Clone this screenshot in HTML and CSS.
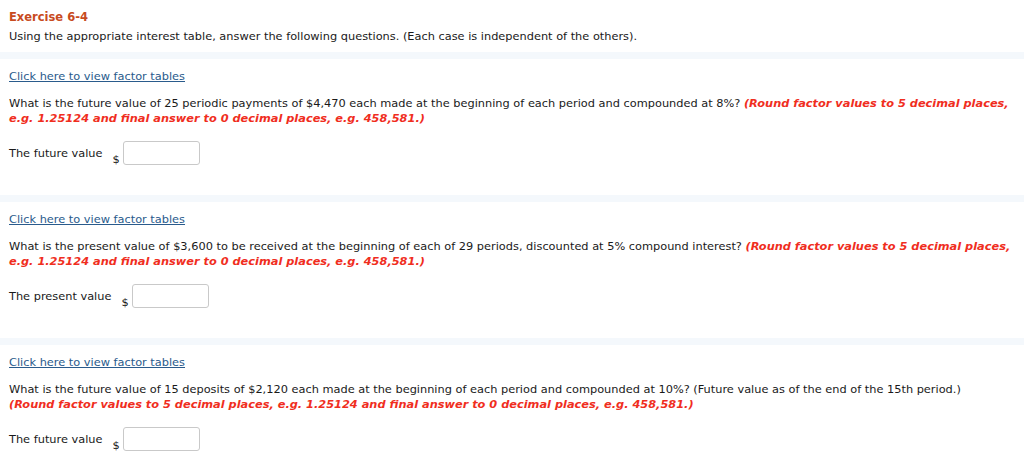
FILE: index.html
```html
<!DOCTYPE html>
<html>
<head>
<meta charset="utf-8">
<link rel="stylesheet" href="styles.css">
</head>
<body>
<div class="header">
  <div class="title">Exercise 6-4</div>
  <div class="intro">Using the appropriate interest table, answer the following questions. (Each case is independent of the others).</div>
</div>
<div class="band"></div>
<div class="section">
  <a class="link" href="#">Click here to view factor tables</a>
  <p class="question">What is the future value of 25 periodic payments of $4,470 each made at the beginning of each period and compounded at 8%? <span class="hint">(Round factor values to 5 decimal places,</span><br><span class="hint">e.g. 1.25124 and final answer to 0 decimal places, e.g. 458,581.)</span></p>
  <div class="answer">
    <span class="label">The future value</span>
    <span class="dollar">$</span>
    <span class="input"></span>
  </div>
</div>
<div class="band"></div>
<div class="section">
  <a class="link" href="#">Click here to view factor tables</a>
  <p class="question">What is the present value of $3,600 to be received at the beginning of each of 29 periods, discounted at 5% compound interest? <span class="hint">(Round factor values to 5 decimal places,</span><br><span class="hint">e.g. 1.25124 and final answer to 0 decimal places, e.g. 458,581.)</span></p>
  <div class="answer">
    <span class="label">The present value</span>
    <span class="dollar">$</span>
    <span class="input"></span>
  </div>
</div>
<div class="band"></div>
<div class="section">
  <a class="link" href="#">Click here to view factor tables</a>
  <p class="question">What is the future value of 15 deposits of $2,120 each made at the beginning of each period and compounded at 10%? (Future value as of the end of the 15th period.)<br><span class="hint">(Round factor values to 5 decimal places, e.g. 1.25124 and final answer to 0 decimal places, e.g. 458,581.)</span></p>
  <div class="answer">
    <span class="label">The future value</span>
    <span class="dollar">$</span>
    <span class="input"></span>
  </div>
</div>
</body>
</html>
```
FILE: styles.css
```css
html, body {
  margin: 0;
  padding: 0;
  background: #ffffff;
}
body {
  font-family: Verdana, "DejaVu Sans", sans-serif;
  font-size: 11.35px;
  line-height: 15px;
  color: #1a1a1a;
}
.header {
  padding: 10px 9px 8px 9px;
}
.title {
  font-weight: bold;
  color: #c84b1e;
  font-size: 11.5px;
  margin-bottom: 4px;
}
.band {
  height: 7px;
  background: #f4f8fc;
}
.section {
  padding: 10px 0 30px 9px;
}
.link {
  display: block;
  width: max-content;
  color: #2a5b8c;
  text-decoration: underline;
}
.question {
  margin: 12px 0 0 0;
  white-space: nowrap;
}
.hint {
  color: #f02e1e;
  font-weight: bold;
  font-style: italic;
}
.answer {
  display: flex;
  align-items: center;
  margin-top: 15px;
  height: 24px;
}
.label {
  margin-right: 10px;
}
.dollar {
  align-self: flex-end;
  line-height: 11px;
  margin-right: 3px;
}
.input {
  display: block;
  width: 77px;
  height: 24px;
  border: 1px solid #c9c9c9;
  border-radius: 3px;
  box-sizing: border-box;
}
```
